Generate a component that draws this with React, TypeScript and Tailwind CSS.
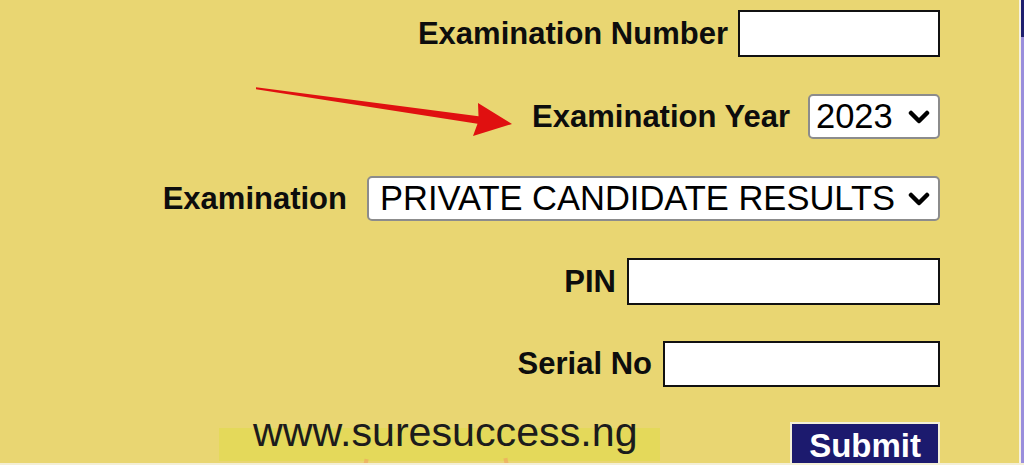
import { useState } from "react";

const labelCls =
  "text-[31px] font-bold leading-[1.15] text-[#0d0d0d] [font-family:'Liberation_Sans',Arial,sans-serif]";

const inputCls = "shrink-0 border-2 border-[#111] bg-white outline-none";

function Chevron() {
  return (
    <svg
      className="pointer-events-none absolute right-[10px] top-1/2 -translate-y-1/2"
      width="22"
      height="14"
      viewBox="0 0 22 14"
    >
      <path d="M3 3 L11 11 L19 3" fill="none" stroke="#000" strokeWidth="4.5" strokeLinecap="round" strokeLinejoin="round" />
    </svg>
  );
}

function FakeSelect({ value, options, onChange, className }: {
  value: string;
  options: string[];
  onChange: (v: string) => void;
  className: string;
}) {
  return (
    <div className={`relative shrink-0 ${className}`}>
      <select
        value={value}
        onChange={(e) => onChange(e.target.value)}
        className="box-border h-[45px] w-full appearance-none rounded-[5px] border-2 border-[#8c8c8c] bg-white text-[34.5px] leading-none text-black outline-none [font-family:'Liberation_Sans',Arial,sans-serif]"
      >
        {options.map((o) => (
          <option key={o}>{o}</option>
        ))}
      </select>
      <Chevron />
    </div>
  );
}

export default function App() {
  const [year, setYear] = useState("2023");
  const [exam, setExam] = useState("PRIVATE CANDIDATE RESULTS");

  return (
    <div className="flex h-[465px] w-full flex-col overflow-hidden bg-[#f4efd6]">
      <div className="flex h-[463px] shrink-0 overflow-hidden">
        <main className="relative flex flex-1 flex-col items-end bg-[#e9d672] pr-[79px]">
          <div className="mt-[10px] flex shrink-0 items-center">
            <span className={labelCls}>Examination Number</span>
            <input className={`${inputCls} ml-[10px] h-[47px] w-[202px]`} />
          </div>

          <div className="mt-[37px] flex shrink-0 items-center">
            <span className={labelCls}>Examination Year</span>
            <FakeSelect
              value={year}
              onChange={setYear}
              options={["2023", "2022", "2021", "2020"]}
              className="ml-[18px] w-[132px] [&_select]:pl-[6px]"
            />
          </div>

          <div className="mt-[37px] flex shrink-0 items-center">
            <span className={labelCls}>Examination</span>
            <FakeSelect
              value={exam}
              onChange={setExam}
              options={["PRIVATE CANDIDATE RESULTS", "SCHOOL CANDIDATE RESULTS"]}
              className="ml-[20px] w-[573px] [&_select]:pl-[11px]"
            />
          </div>

          <div className="mt-[37px] flex shrink-0 items-center">
            <span className={labelCls}>PIN</span>
            <input className={`${inputCls} ml-[11px] h-[47px] w-[313px]`} />
          </div>

          <div className="mt-[36px] flex shrink-0 items-center">
            <span className={labelCls}>Serial No</span>
            <input className={`${inputCls} ml-[11px] h-[46px] w-[277px]`} />
          </div>

          <button className="mt-[35px] shrink-0 border-2 border-[#f3efd9] bg-[#1c1a6e] px-[17px] pb-[6px] pt-[3px] text-[33px] font-bold leading-[1.15] text-white [font-family:'Liberation_Sans',Arial,sans-serif]">
            Submit
          </button>

          {/* watermark */}
          <div className="pointer-events-none absolute left-[219px] top-[428px] h-[33px] w-[441px] bg-[#e4d95a]" />
          <span className="pointer-events-none absolute left-[364px] top-[459px] h-[6px] w-[4px] rotate-12 bg-[#f0a060]/60" />
          <span className="pointer-events-none absolute left-[504px] top-[458px] h-[6px] w-[4px] -rotate-12 bg-[#f0a060]/60" />
          <span className="pointer-events-none absolute left-[253px] top-[412px] text-[41.2px] leading-none text-[#1c1c1c] [font-family:'Liberation_Sans',Arial,sans-serif]">
            www.suresuccess.ng
          </span>

          {/* red arrow annotation */}
          <svg className="pointer-events-none absolute left-0 top-0" width="1019" height="463" viewBox="0 0 1019 463">
            <polygon
              points="256,87.3 478.5,116.3 478,103 512,124 473,136 477.5,123.7 256,89.2"
              fill="#e01010"
            />
          </svg>
        </main>
        <div className="w-[2px] bg-[#f6f2e0]" />
        <div className="flex w-[3px] flex-col bg-[#9a8fdc]">
          <div className="h-[37px] bg-[#1e1f6e]" />
        </div>
      </div>
    </div>
  );
}
